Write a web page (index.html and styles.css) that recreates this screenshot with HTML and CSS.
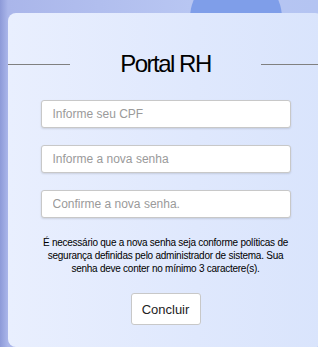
FILE: index.html
```html
<!DOCTYPE html>
<html lang="pt">
<head>
<meta charset="utf-8">
<title>Portal RH</title>
<link rel="stylesheet" href="styles.css">
</head>
<body>
<div class="bubble"></div>
<main class="card">
  <div class="title-row">
    <span class="rule"></span>
    <h1 class="title">Portal RH</h1>
    <span class="rule"></span>
  </div>
  <form class="form">
    <input class="field" type="text" placeholder="Informe seu CPF">
    <input class="field" type="password" placeholder="Informe a nova senha">
    <input class="field" type="password" placeholder="Confirme a nova senha.">
    <p class="note">É necessário que a nova senha seja conforme políticas de segurança definidas pelo administrador de sistema. Sua senha deve conter no mínimo 3 caractere(s).</p>
    <button class="btn" type="button">Concluir</button>
  </form>
</main>
</body>
</html>
```
FILE: styles.css
```css
html, body {
  margin: 0;
  padding: 0;
  height: 100%;
}
body {
  width: 318px;
  height: 347px;
  overflow: hidden;
  position: relative;
  background: linear-gradient(90deg, #8d9ad8 0px, #aab6ea 8px, #b8c6f2 60%, #b4c4f2 100%);
  font-family: "Liberation Sans", Arial, sans-serif;
}
.bubble {
  position: absolute;
  left: 190px;
  top: -28px;
  width: 92px;
  height: 92px;
  border-radius: 50%;
  background: #7f9ee9;
}
.card {
  position: relative;
  margin: 13px 0 0 8px;
  width: 315px;
  height: 334px;
  border-radius: 8px;
  background: linear-gradient(90deg, #e9effe 0%, #dfe8fd 60%, #d9e4fc 100%);
  box-sizing: border-box;
  padding-top: 38px;
}
.title-row {
  display: flex;
  align-items: center;
  height: 26px;
}
.rule {
  flex: 1;
  height: 1px;
  background: #808080;
}
.title {
  margin: 0;
  padding: 0 50px;
  font-size: 24px;
  font-weight: normal;
  letter-spacing: -1.5px;
  color: #000;
  line-height: 26px;
}
.form {
  display: flex;
  flex-direction: column;
  align-items: center;
  margin-top: 23px;
}
.field {
  width: 250px;
  height: 28px;
  box-sizing: border-box;
  border: 1px solid #c8c8c8;
  border-radius: 3px;
  background: #fff;
  box-shadow: 0 1px 2px rgba(0,0,0,0.12);
  padding: 0 11px;
  font-family: "Liberation Sans", Arial, sans-serif;
  font-size: 12px;
  margin: 0 0 17px 0;
  outline: none;
}
.field::placeholder {
  color: #9a9a9a;
}
.note {
  margin: 1px 0 0 0;
  width: 256px;
  text-align: center;
  font-family: "Liberation Sans", Arial, sans-serif;
  font-size: 10px;
  letter-spacing: -0.25px;
  line-height: 13px;
  color: #000;
}
.btn {
  margin-top: 18px;
  width: 70px;
  height: 32px;
  background: #fff;
  border: 1px solid #c8c8c8;
  border-radius: 3px;
  font-family: "Liberation Sans", Arial, sans-serif;
  font-size: 13px;
  color: #222;
  padding: 0;
}
```
